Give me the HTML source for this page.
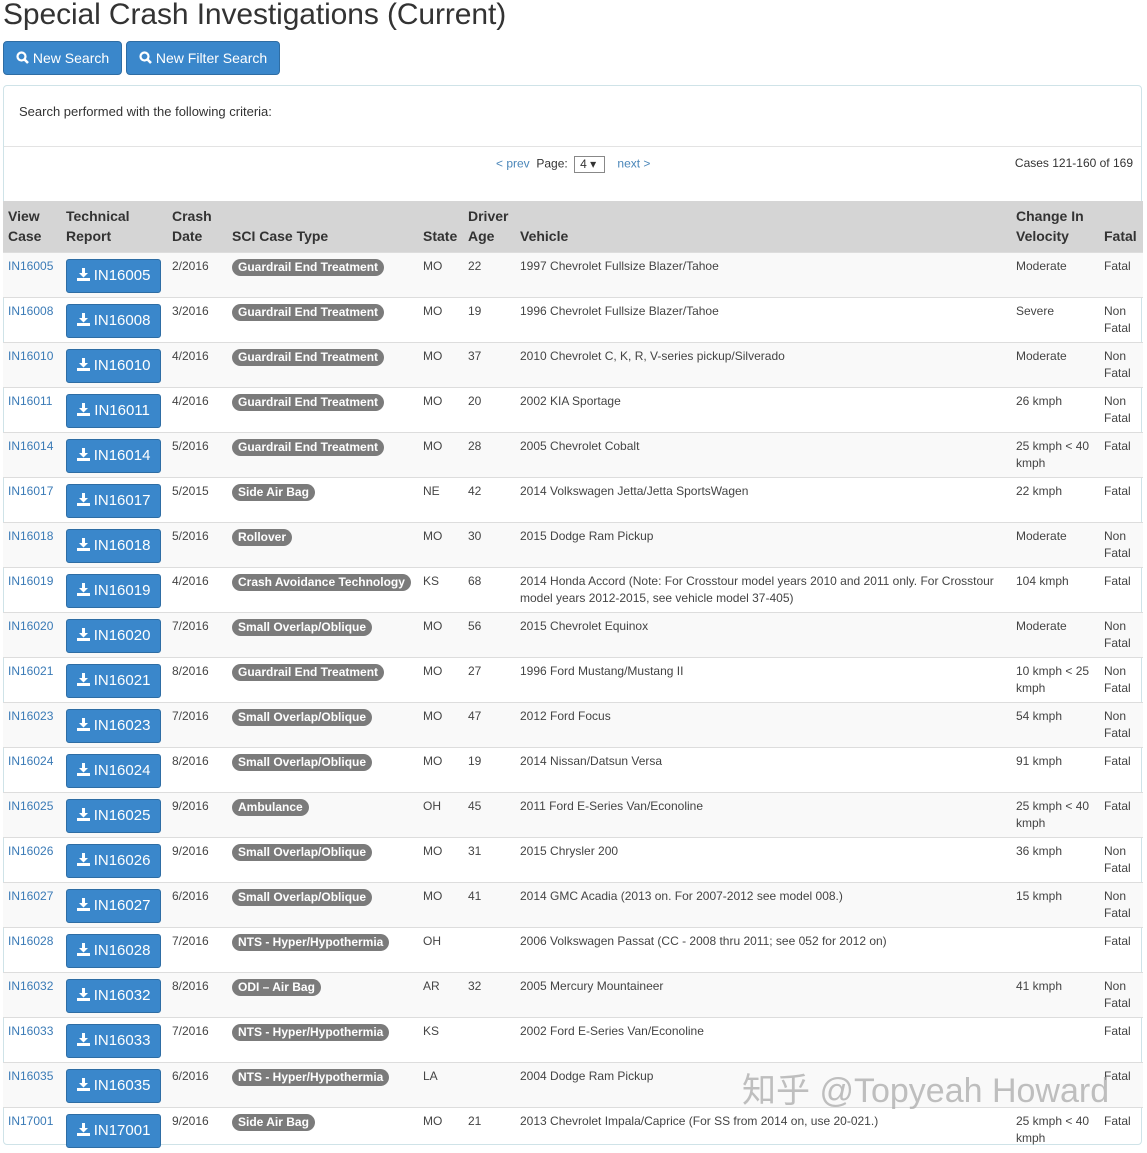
<!DOCTYPE html>
<html><head><meta charset="utf-8"><style>
*{box-sizing:border-box}
body{margin:0;width:1147px;height:1136px;overflow:hidden;background:#fff;font-family:"Liberation Sans",Arial,sans-serif;color:#333;font-size:12px;position:relative}
h1{position:absolute;left:3px;top:-2px;margin:0;font-weight:normal;font-size:30px;color:#333;letter-spacing:-0.1px}
.btn{position:absolute;top:41px;height:34px;background:#3a87cb;border:1px solid #2e6da4;border-radius:4px;color:#fff;font-size:14px;line-height:32px;padding-left:12px}
.panel{position:absolute;left:3px;top:85px;width:1139px;height:1060px;border:1px solid #cfe3e8;border-radius:4px}
.crit{position:absolute;left:15px;top:18px;font-size:13px}
.hr{position:absolute;left:0;right:0;top:60px;border-top:1px solid #e3e3e3}
.pg{position:absolute;top:70px;left:492px;font-size:12px}
.pg a{color:#4a86b9}
.sel{display:inline-block;border:1px solid #888;height:17px;width:31px;padding-left:5px;line-height:15px;margin:0 9px 0 3px;vertical-align:middle;font-size:12px}
.cases{position:absolute;top:70px;right:8px;font-size:12px}
table{position:absolute;left:-1px;top:115px;border-collapse:collapse;table-layout:fixed;width:1140px}
th{background:#d5d5d5;font-size:14px;font-weight:bold;text-align:left;vertical-align:bottom;padding:5px 5px 6px;line-height:20px;height:51px}
td{vertical-align:top;padding:5px 5px 0;height:45px;line-height:17px;border-top:1px solid #ddd;color:#444}
tr.o td{background:#f9f9f9}
td a{color:#3a7ab6}
.dl{display:inline-block;width:95px;height:34px;background:#3a87cb;border:1px solid #2e6da4;border-radius:3px;color:#fff;font-size:15px;line-height:32px;text-align:center;margin-top:1px}
.b{display:inline-block;background:#7b7b7b;color:#fff;font-weight:bold;border-radius:9px;padding:0 6px;line-height:17px;font-size:12px;margin-top:1px}
.wm{position:absolute;left:742px;top:1063px;font-size:34px;color:rgba(170,170,170,0.75);font-family:"Liberation Sans","Noto Sans CJK SC",sans-serif}
</style></head><body>
<h1>Special Crash Investigations (Current)</h1>
<div class="btn" style="left:3px;width:119px"><svg width="13" height="13" viewBox="0 0 13 13" style="vertical-align:-1px"><circle cx="5.5" cy="5.5" r="4" fill="none" stroke="#fff" stroke-width="2.2"/><path d="M8.5 8.5l3.5 3.5" stroke="#fff" stroke-width="2.6"/></svg> New Search</div>
<div class="btn" style="left:126px;width:154px"><svg width="13" height="13" viewBox="0 0 13 13" style="vertical-align:-1px"><circle cx="5.5" cy="5.5" r="4" fill="none" stroke="#fff" stroke-width="2.2"/><path d="M8.5 8.5l3.5 3.5" stroke="#fff" stroke-width="2.6"/></svg> New Filter Search</div>
<div class="panel">
<div class="crit">Search performed with the following criteria:</div>
<div class="hr"></div>
<div class="pg"><a>&lt; prev</a>&nbsp; Page: <span class="sel">4 ▾</span> <a>next &gt;</a></div>
<div class="cases">Cases 121-160 of 169</div>
<table>
<colgroup><col style="width:58px"><col style="width:106px"><col style="width:60px"><col style="width:191px"><col style="width:45px"><col style="width:52px"><col style="width:496px"><col style="width:88px"><col style="width:44px"></colgroup>
<tbody>
<tr><th>View Case</th><th>Technical Report</th><th>Crash Date</th><th>SCI Case Type</th><th>State</th><th>Driver Age</th><th>Vehicle</th><th>Change In Velocity</th><th>Fatal</th></tr>
</tbody>
</table>
</div>
<div class="wm">知乎 @Topyeah Howard</div>
<script>
var d=[
["IN16005","2/2016","Guardrail End Treatment","MO","22","1997 Chevrolet Fullsize Blazer/Tahoe","Moderate","Fatal"],
["IN16008","3/2016","Guardrail End Treatment","MO","19","1996 Chevrolet Fullsize Blazer/Tahoe","Severe","Non Fatal"],
["IN16010","4/2016","Guardrail End Treatment","MO","37","2010 Chevrolet C, K, R, V-series pickup/Silverado","Moderate","Non Fatal"],
["IN16011","4/2016","Guardrail End Treatment","MO","20","2002 KIA Sportage","26 kmph","Non Fatal"],
["IN16014","5/2016","Guardrail End Treatment","MO","28","2005 Chevrolet Cobalt","25 kmph &lt; 40 kmph","Fatal"],
["IN16017","5/2015","Side Air Bag","NE","42","2014 Volkswagen Jetta/Jetta SportsWagen","22 kmph","Fatal"],
["IN16018","5/2016","Rollover","MO","30","2015 Dodge Ram Pickup","Moderate","Non Fatal"],
["IN16019","4/2016","Crash Avoidance Technology","KS","68","2014 Honda Accord (Note: For Crosstour model years 2010 and 2011 only. For Crosstour model years 2012-2015, see vehicle model 37-405)","104 kmph","Fatal"],
["IN16020","7/2016","Small Overlap/Oblique","MO","56","2015 Chevrolet Equinox","Moderate","Non Fatal"],
["IN16021","8/2016","Guardrail End Treatment","MO","27","1996 Ford Mustang/Mustang II","10 kmph &lt; 25 kmph","Non Fatal"],
["IN16023","7/2016","Small Overlap/Oblique","MO","47","2012 Ford Focus","54 kmph","Non Fatal"],
["IN16024","8/2016","Small Overlap/Oblique","MO","19","2014 Nissan/Datsun Versa","91 kmph","Fatal"],
["IN16025","9/2016","Ambulance","OH","45","2011 Ford E-Series Van/Econoline","25 kmph &lt; 40 kmph","Fatal"],
["IN16026","9/2016","Small Overlap/Oblique","MO","31","2015 Chrysler 200","36 kmph","Non Fatal"],
["IN16027","6/2016","Small Overlap/Oblique","MO","41","2014 GMC Acadia (2013 on. For 2007-2012 see model 008.)","15 kmph","Non Fatal"],
["IN16028","7/2016","NTS - Hyper/Hypothermia","OH","","2006 Volkswagen Passat (CC - 2008 thru 2011; see 052 for 2012 on)","","Fatal"],
["IN16032","8/2016","ODI – Air Bag","AR","32","2005 Mercury Mountaineer","41 kmph","Non Fatal"],
["IN16033","7/2016","NTS - Hyper/Hypothermia","KS","","2002 Ford E-Series Van/Econoline","","Fatal"],
["IN16035","6/2016","NTS - Hyper/Hypothermia","LA","","2004 Dodge Ram Pickup","","Fatal"],
["IN17001","9/2016","Side Air Bag","MO","21","2013 Chevrolet Impala/Caprice (For SS from 2014 on, use 20-021.)","25 kmph &lt; 40 kmph","Fatal"]];
var ic='<svg width="13" height="13" viewBox="0 0 13 13" style="vertical-align:-1px"><path d="M5 0h3v5h3l-4.5 4.5L2 5h3z M0 10h13v3H0z" fill="#fff"/></svg>';
var h='';d.forEach(function(r,i){h+='<tr class="'+(i%2?'':'o')+'"><td><a>'+r[0]+'</a></td><td><span class="dl">'+ic+' '+r[0]+'</span></td><td>'+r[1]+'</td><td><span class="b">'+r[2]+'</span></td><td>'+r[3]+'</td><td>'+r[4]+'</td><td>'+r[5]+'</td><td>'+r[6]+'</td><td>'+r[7]+'</td></tr>';});
document.querySelector('table tbody').insertAdjacentHTML('beforeend',h);
</script>
</body></html>
